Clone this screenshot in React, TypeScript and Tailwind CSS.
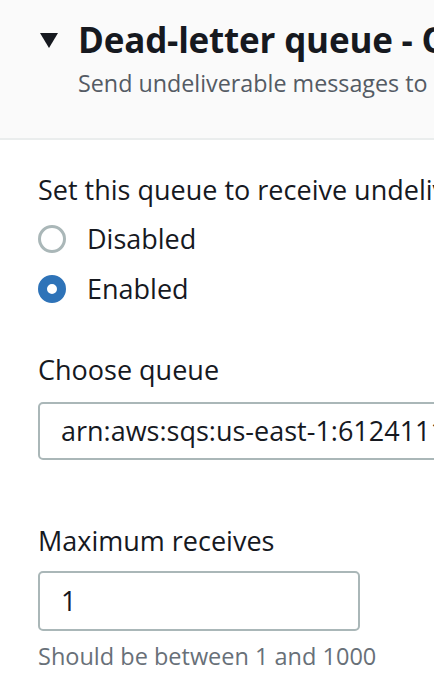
import React from "react";

export default function App() {
  return (
    <div className="w-[434px] h-[692px] overflow-hidden bg-white text-[#16191f]" style={{ fontFamily: '"Open Sans", "Noto Sans", sans-serif' }}>
      <div className="bg-[#fafafa] border-b-2 border-[#eaeded] h-[140px] pl-[40px] pt-[18px] whitespace-nowrap">
        <div className="flex items-center gap-[20px] h-[44px]">
          <svg width="18" height="15" viewBox="0 0 18 15" className="shrink-0">
            <polygon points="0,0 18,0 9,15" fill="#16191f" />
          </svg>
          <span className="text-[35px] font-bold leading-[44px] tracking-[-0.2px]">Dead-letter queue - Optional</span>
        </div>
        <div className="mt-[3px] pl-[38px] text-[23.3px] leading-[36px] text-[#545b64]">Send undeliverable messages to a dead-letter queue.</div>
      </div>
      <div className="pl-[38px] pt-[30px] whitespace-nowrap">
        <div className="text-[27px] leading-[40px]">Set this queue to receive undeliverable messages.</div>
        <div className="mt-[4px] flex items-center gap-[21px] h-[50px]">
          <span className="w-[28px] h-[28px] rounded-full border-[3px] border-[#aab7b8] bg-white shrink-0" />
          <span className="text-[27px]">Disabled</span>
        </div>
        <div className="flex items-center gap-[21px] h-[50px]">
          <span className="w-[28px] h-[28px] rounded-full border-[9px] border-[#2e73b8] bg-white shrink-0" />
          <span className="text-[27px]">Enabled</span>
        </div>
        <div className="mt-[36px] text-[27px] leading-[40px]">Choose queue</div>
        <div className="mt-[12px] h-[58px] w-[420px] border-2 border-[#aab7b8] rounded-[5px] flex items-center pl-[21px] text-[27px]">
          arn:aws:sqs:us-east-1:612411111111:dlq
        </div>
        <div className="mt-[61px] text-[27px] leading-[40px]">Maximum receives</div>
        <div className="mt-[10px] h-[60px] w-[322px] border-2 border-[#aab7b8] rounded-[5px] flex items-center pl-[21px] text-[27px]">
          1
        </div>
        <div className="mt-[8px] text-[23.5px] leading-[34px] text-[#687078]">Should be between 1 and 1000</div>
      </div>
    </div>
  );
}
